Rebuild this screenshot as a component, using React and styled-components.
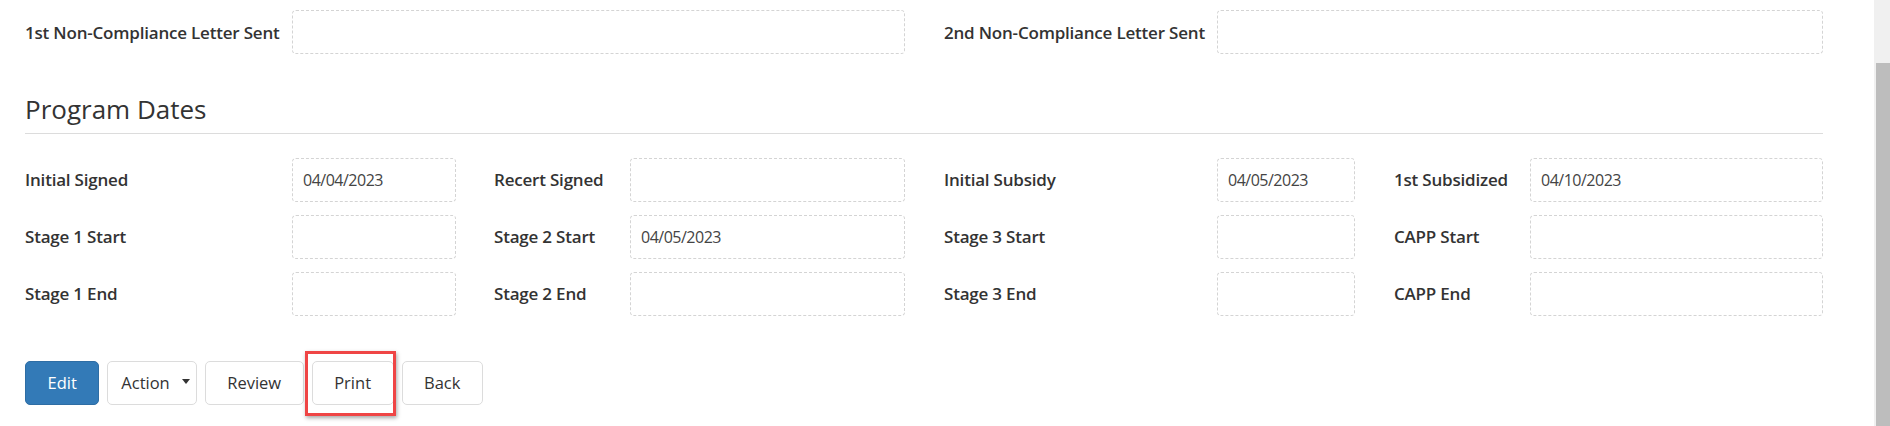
import styled, {createGlobalStyle} from 'styled-components';

const GlobalStyle = createGlobalStyle`
    html {
        overflow: hidden;
    }
    body {
        margin: 0;
        background: #fff;
        font-family: "Open Sans", "Noto Sans", sans-serif;
        color: #333;
    }
`

const LEFT_COLS = "267px 164px 38px 136px 275px";
const RIGHT_COLS = "273px 138px 39px 136px 293px";

const dateRows = [
    [
        ["Initial Signed", "04/04/2023"], ["Recert Signed", ""],
        ["Initial Subsidy", "04/05/2023"], ["1st Subsidized", "04/10/2023"],
    ],
    [
        ["Stage 1 Start", ""], ["Stage 2 Start", "04/05/2023"],
        ["Stage 3 Start", ""], ["CAPP Start", ""],
    ],
    [
        ["Stage 1 End", ""], ["Stage 2 End", ""],
        ["Stage 3 End", ""], ["CAPP End", ""],
    ],
];

function App () {
    return (
        <>
            <GlobalStyle />
            <Page>
                <Halves>
                    <Half cols="267px 613px">
                        <Label>1st Non-Compliance Letter Sent</Label>
                        <Field />
                    </Half>
                    <Half cols="273px 606px">
                        <Label>2nd Non-Compliance Letter Sent</Label>
                        <Field />
                    </Half>
                </Halves>

                <SectionTitle>Program Dates</SectionTitle>

                <DateRows>
                    {dateRows.map((row, i) => (
                        <Halves key={i}>
                            <Half cols={LEFT_COLS}>
                                <Label>{row[0][0]}</Label>
                                <Field>{row[0][1]}</Field>
                                <span />
                                <Label>{row[1][0]}</Label>
                                <Field>{row[1][1]}</Field>
                            </Half>
                            <Half cols={RIGHT_COLS}>
                                <Label>{row[2][0]}</Label>
                                <Field>{row[2][1]}</Field>
                                <span />
                                <Label>{row[3][0]}</Label>
                                <Field>{row[3][1]}</Field>
                            </Half>
                        </Halves>
                    ))}
                </DateRows>

                <Toolbar>
                    <Button primary>Edit</Button>
                    <Button compact>Action <Caret /></Button>
                    <Button>Review</Button>
                    <Marked>
                        <Button>Print</Button>
                        <Highlight />
                    </Marked>
                    <Button>Back</Button>
                </Toolbar>
            </Page>
            <ScrollTrack>
                <ScrollThumb />
            </ScrollTrack>
        </>
    )
}

const Page = styled.div`
    box-sizing: border-box;
    width: 1873px;
    padding: 10px 0 20px 25px;
`

const Halves = styled.div`
    display: flex;
    gap: 39px;
`

const Half = styled.div`
    display: grid;
    grid-template-columns: ${p => p.cols};
    align-items: center;
`

const Label = styled.div`
    font-size: 17px;
    font-weight: 600;
    letter-spacing: -0.2px;
    color: #333;
    white-space: nowrap;
`

const Field = styled.div`
    box-sizing: border-box;
    height: 44px;
    border: 1px dashed #d4d4d4;
    border-radius: 4px;
    padding: 0 10px;
    display: flex;
    align-items: center;
    font-size: 16px;
    letter-spacing: -0.5px;
    color: #444;
`

const SectionTitle = styled.div`
    margin-top: 41px;
    width: 1798px;
    font-size: 26px;
    font-weight: 400;
    line-height: 1.1;
    padding-bottom: 9px;
    border-bottom: 1px solid #dcdcdc;
    color: #333;
`

const DateRows = styled.div`
    margin-top: 24px;
    display: flex;
    flex-direction: column;
    gap: 13px;
`

const Toolbar = styled.div`
    margin-top: 45px;
    display: flex;
    gap: 8px;
    align-items: center;
`

const Button = styled.button`
    box-sizing: border-box;
    height: 44px;
    padding: ${p => p.compact ? "0 6px 0 13px" : "0 21.5px"};
    border: 1px solid ${p => p.primary ? "#2e6da4" : "#dcdcdc"};
    border-radius: 5px;
    background: ${p => p.primary ? "#337ab7" : "#fff"};
    color: ${p => p.primary ? "#fff" : "#333"};
    font-family: "Open Sans", "Noto Sans", sans-serif;
    font-size: 16.5px;
    display: flex;
    align-items: center;
    gap: 12px;
`

const Caret = styled.span`
    width: 0;
    height: 0;
    border-left: 4.5px solid transparent;
    border-right: 4.5px solid transparent;
    border-top: 5px solid #333;
    margin-top: -2px;
`

const Marked = styled.div`
    position: relative;
    display: flex;
`

const Highlight = styled.div`
    position: absolute;
    top: -10px;
    left: -7px;
    right: -2px;
    bottom: -11px;
    border: 3px solid #ef4545;
    box-shadow: 1px 2px 4px rgba(0, 0, 0, 0.35);
    pointer-events: none;
`

const ScrollTrack = styled.div`
    position: fixed;
    top: 0;
    right: 0;
    width: 16px;
    height: 100vh;
    background: #f0f0f0;
`

const ScrollThumb = styled.div`
    position: absolute;
    top: 63px;
    bottom: 0;
    left: 2px;
    right: 0;
    background: #bdbdbd;
`

export default App;
